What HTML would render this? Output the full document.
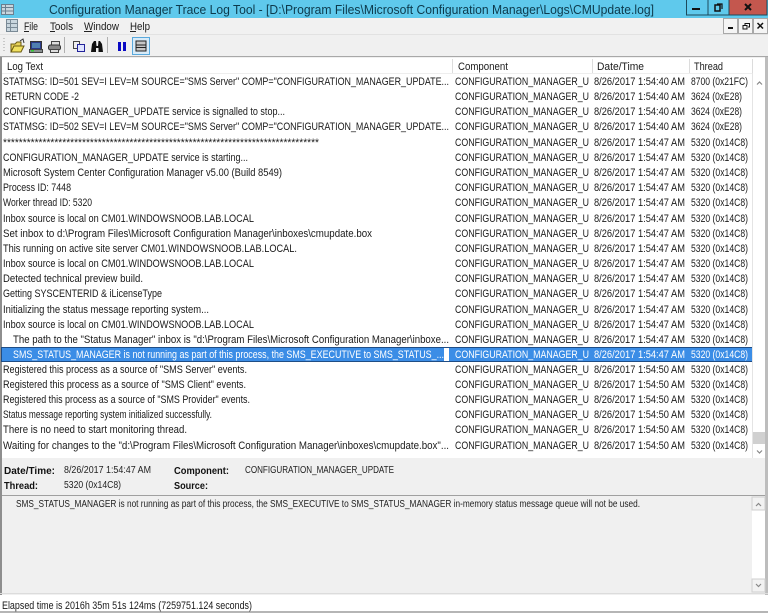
<!DOCTYPE html>
<html><head><meta charset="utf-8"><style>
html,body{margin:0;padding:0;width:768px;height:613px;overflow:hidden;background:#f0f0f0}
svg{display:block;font-family:"Liberation Sans",sans-serif;filter:blur(0.3px)}
text{fill:#1a1a1a;font-size:11px}
.s{fill:#222;font-size:10px}
.b{font-weight:bold;font-size:10px;fill:#111}
.w{fill:#fff}
</style></head><body>
<svg width="768" height="613" viewBox="0 0 768 613" xmlns="http://www.w3.org/2000/svg">
<rect width="768" height="613" fill="#f0f0f0"/>
<!-- title bar -->
<rect width="768" height="18" fill="#5fc9ec"/>
<rect x="1.500" y="4.500" width="12" height="10" fill="#c9d6de" stroke="#6b8090"/>
<path d="M1.500 7.500H13.500M1.500 11H13.500M5.500 4.500V14.500" stroke="#6b8090" fill="none"/>
<text x="49" y="14" textLength="605" lengthAdjust="spacingAndGlyphs" style="font-size:13px;fill:#0d3a4c">Configuration Manager Trace Log Tool - [D:\Program Files\Microsoft Configuration Manager\Logs\CMUpdate.log]</text>
<rect x="686.500" y="-1" width="21.500" height="16" fill="#5fc9ec" stroke="#1c4a5c"/>
<rect x="708" y="-1" width="21" height="16" fill="#5fc9ec" stroke="#1c4a5c"/>
<rect x="729" y="-1" width="38" height="16" fill="#c4574e" stroke="#1c4a5c"/>
<rect x="692" y="8" width="8" height="2" fill="#111"/>
<rect x="715" y="5" width="5" height="6" fill="none" stroke="#111" stroke-width="1.500"/>
<path d="M717 4H722V9" fill="none" stroke="#111" stroke-width="1.200"/>
<path d="M745 4L751 10M751 4L745 10" stroke="#111" stroke-width="2"/>
<!-- menu bar -->
<rect y="18" width="768" height="17" fill="#f1f1f1"/>
<rect x="6.500" y="19.500" width="11" height="12" fill="#c9d6de" stroke="#7a8a96"/>
<path d="M6.500 23.500H17.500M6.500 27.500H17.500M10.500 19.500V31.500" stroke="#7a8a96" fill="none"/>
<text x="24" y="30" textLength="14" lengthAdjust="spacingAndGlyphs">File</text>
<path d="M24 31.500H29" stroke="#222"/>
<text x="50" y="30" textLength="23" lengthAdjust="spacingAndGlyphs">Tools</text>
<path d="M50 31.500H55" stroke="#222"/>
<text x="84" y="30" textLength="35" lengthAdjust="spacingAndGlyphs">Window</text>
<path d="M84 31.500H92" stroke="#222"/>
<text x="130" y="30" textLength="20" lengthAdjust="spacingAndGlyphs">Help</text>
<path d="M130 31.500H136" stroke="#222"/>
<rect x="723.500" y="18.500" width="14" height="15" fill="#f4f4f4" stroke="#a8a8a8"/>
<rect x="738.500" y="18.500" width="14" height="15" fill="#f4f4f4" stroke="#a8a8a8"/>
<rect x="753.500" y="18.500" width="14" height="15" fill="#f4f4f4" stroke="#a8a8a8"/>
<rect x="728" y="27" width="5" height="2" fill="#111"/>
<rect x="743" y="25.500" width="4" height="3.500" fill="none" stroke="#111"/>
<path d="M745 25V23.500H749.500V27H748" fill="none" stroke="#111"/>
<path d="M757.500 23L763 28.500M763 23L757.500 28.500" stroke="#111" stroke-width="1.500"/>
<path d="M0 34.500H768" stroke="#e2e2e2"/>
<!-- toolbar -->
<path d="M4 38V52" stroke="#a0a0a0" stroke-dasharray="1 2"/>
<!-- open -->
<path d="M11 52V44H15L17 42H21V46" fill="#e8d25a" stroke="#6a5a10"/>
<path d="M11 52L14 46H24L21 52Z" fill="#f0e060" stroke="#6a5a10"/>
<path d="M20 41L23 39L24 43" fill="none" stroke="#333"/>
<!-- computer -->
<rect x="30.500" y="41.500" width="11" height="8" fill="#2a3a8a" stroke="#333"/>
<rect x="32" y="43" width="8" height="5" fill="#4f7fb0"/>
<rect x="29.500" y="49.500" width="13" height="3" fill="#8a9090" stroke="#444"/>
<rect x="31" y="50" width="3" height="1.500" fill="#3c3"/>
<!-- printer -->
<rect x="51.500" y="41.500" width="8" height="4" fill="#ddd" stroke="#444"/>
<rect x="48.500" y="45" width="12" height="5" rx="2" fill="#888" stroke="#333"/>
<rect x="50.500" y="49.500" width="8" height="3" fill="#ddd" stroke="#444"/>
<path d="M64.500 37V53" stroke="#b0b0b0"/>
<!-- copy -->
<rect x="73.500" y="41.500" width="6" height="7" fill="#eee" stroke="#444"/>
<rect x="77.500" y="44.500" width="7" height="7" fill="#dfe4ff" stroke="#22229a"/>
<!-- binoculars -->
<path d="M91 52L92 44L94 41H96L96.500 46H98L98.500 41H100L102 44L103 52H98.500V48H96V52Z" fill="#111"/>
<path d="M107.500 37V53" stroke="#b0b0b0"/>
<!-- pause -->
<rect x="118" y="42" width="3" height="9" fill="#0a0ac4"/>
<rect x="123" y="42" width="3" height="9" fill="#0a0ac4"/>
<!-- details toggle -->
<rect x="132.500" y="37.500" width="17" height="17" fill="#d8ebf8" stroke="#5aa9dc"/>
<rect x="136" y="41" width="10" height="10" fill="#c6c6c6" stroke="#222"/>
<path d="M136 45H146M136 47.500H146" stroke="#222"/>
<!-- list -->
<path d="M0 56.500H768" stroke="#a8a8a8"/>
<rect x="0" y="57" width="2" height="538" fill="#8e8e8e"/>
<rect x="2" y="58" width="766" height="400" fill="#fff"/>
<rect x="765" y="57" width="3" height="538" fill="#bdbdbd"/>
<path d="M452.500 59V73M592.500 59V73M689.500 59V73M752.500 59V73" stroke="#dcdcdc"/>
<path d="M2 73.500H753" stroke="#eee"/>
<text x="7" y="70" textLength="36" lengthAdjust="spacingAndGlyphs">Log Text</text>
<text x="458" y="70" textLength="50" lengthAdjust="spacingAndGlyphs">Component</text>
<text x="597" y="70" textLength="47" lengthAdjust="spacingAndGlyphs">Date/Time</text>
<text x="694" y="70" textLength="29" lengthAdjust="spacingAndGlyphs">Thread</text>
<!-- selected row -->
<rect x="1.500" y="347.500" width="751" height="14" fill="#3b8de6" stroke="#1f4d85"/>
<rect x="444" y="348" width="5" height="13" fill="#fff"/>
<g>
<text x="3" y="85" textLength="446" lengthAdjust="spacingAndGlyphs">STATMSG: ID=501 SEV=I LEV=M SOURCE="SMS Server" COMP="CONFIGURATION_MANAGER_UPDATE...</text>
<text x="5" y="100" textLength="74" lengthAdjust="spacingAndGlyphs">RETURN CODE -2</text>
<text x="3" y="115" textLength="282" lengthAdjust="spacingAndGlyphs">CONFIGURATION_MANAGER_UPDATE service is signalled to stop...</text>
<text x="3" y="130" textLength="446" lengthAdjust="spacingAndGlyphs">STATMSG: ID=502 SEV=I LEV=M SOURCE="SMS Server" COMP="CONFIGURATION_MANAGER_UPDATE...</text>
<text x="3" y="146" textLength="316" lengthAdjust="spacingAndGlyphs">********************************************************************************</text>
<text x="3" y="161" textLength="245" lengthAdjust="spacingAndGlyphs">CONFIGURATION_MANAGER_UPDATE service is starting...</text>
<text x="3" y="176" textLength="279" lengthAdjust="spacingAndGlyphs">Microsoft System Center Configuration Manager v5.00 (Build 8549)</text>
<text x="3" y="191" textLength="68" lengthAdjust="spacingAndGlyphs">Process ID: 7448</text>
<text x="3" y="206" textLength="89" lengthAdjust="spacingAndGlyphs">Worker thread ID: 5320</text>
<text x="3" y="222" textLength="251" lengthAdjust="spacingAndGlyphs">Inbox source is local on CM01.WINDOWSNOOB.LAB.LOCAL</text>
<text x="3" y="237" textLength="369" lengthAdjust="spacingAndGlyphs">Set inbox to d:\Program Files\Microsoft Configuration Manager\inboxes\cmupdate.box</text>
<text x="3" y="252" textLength="294" lengthAdjust="spacingAndGlyphs">This running on active site server CM01.WINDOWSNOOB.LAB.LOCAL.</text>
<text x="3" y="267" textLength="251" lengthAdjust="spacingAndGlyphs">Inbox source is local on CM01.WINDOWSNOOB.LAB.LOCAL</text>
<text x="3" y="282" textLength="140" lengthAdjust="spacingAndGlyphs">Detected technical preview build.</text>
<text x="3" y="297" textLength="159" lengthAdjust="spacingAndGlyphs">Getting SYSCENTERID &amp; iLicenseType</text>
<text x="3" y="313" textLength="206" lengthAdjust="spacingAndGlyphs">Initializing the status message reporting system...</text>
<text x="3" y="328" textLength="251" lengthAdjust="spacingAndGlyphs">Inbox source is local on CM01.WINDOWSNOOB.LAB.LOCAL</text>
<text x="13" y="343" textLength="436" lengthAdjust="spacingAndGlyphs">The path to the "Status Manager" inbox is "d:\Program Files\Microsoft Configuration Manager\inboxe...</text>
<text class="w" x="13" y="358" textLength="431" lengthAdjust="spacingAndGlyphs">SMS_STATUS_MANAGER is not running as part of this process, the SMS_EXECUTIVE to SMS_STATUS_...</text>
<text x="3" y="373" textLength="244" lengthAdjust="spacingAndGlyphs">Registered this process as a source of "SMS Server" events.</text>
<text x="3" y="388" textLength="243" lengthAdjust="spacingAndGlyphs">Registered this process as a source of "SMS Client" events.</text>
<text x="3" y="403" textLength="247" lengthAdjust="spacingAndGlyphs">Registered this process as a source of "SMS Provider" events.</text>
<text x="3" y="418" textLength="209" lengthAdjust="spacingAndGlyphs">Status message reporting system initialized successfully.</text>
<text x="3" y="433" textLength="184" lengthAdjust="spacingAndGlyphs">There is no need to start monitoring thread.</text>
<text x="3" y="449" textLength="446" lengthAdjust="spacingAndGlyphs">Waiting for changes to the "d:\Program Files\Microsoft Configuration Manager\inboxes\cmupdate.box"...</text>
</g>
<g>
<text x="455" y="85" textLength="134" lengthAdjust="spacingAndGlyphs">CONFIGURATION_MANAGER_U</text><text x="594" y="85" textLength="91" lengthAdjust="spacingAndGlyphs">8/26/2017 1:54:40 AM</text><text x="691" y="85" textLength="57" lengthAdjust="spacingAndGlyphs">8700 (0x21FC)</text>
<text x="455" y="100" textLength="134" lengthAdjust="spacingAndGlyphs">CONFIGURATION_MANAGER_U</text><text x="594" y="100" textLength="91" lengthAdjust="spacingAndGlyphs">8/26/2017 1:54:40 AM</text><text x="691" y="100" textLength="51" lengthAdjust="spacingAndGlyphs">3624 (0xE28)</text>
<text x="455" y="115" textLength="134" lengthAdjust="spacingAndGlyphs">CONFIGURATION_MANAGER_U</text><text x="594" y="115" textLength="91" lengthAdjust="spacingAndGlyphs">8/26/2017 1:54:40 AM</text><text x="691" y="115" textLength="51" lengthAdjust="spacingAndGlyphs">3624 (0xE28)</text>
<text x="455" y="130" textLength="134" lengthAdjust="spacingAndGlyphs">CONFIGURATION_MANAGER_U</text><text x="594" y="130" textLength="91" lengthAdjust="spacingAndGlyphs">8/26/2017 1:54:40 AM</text><text x="691" y="130" textLength="51" lengthAdjust="spacingAndGlyphs">3624 (0xE28)</text>
<text x="455" y="146" textLength="134" lengthAdjust="spacingAndGlyphs">CONFIGURATION_MANAGER_U</text><text x="594" y="146" textLength="91" lengthAdjust="spacingAndGlyphs">8/26/2017 1:54:47 AM</text><text x="691" y="146" textLength="57" lengthAdjust="spacingAndGlyphs">5320 (0x14C8)</text>
<text x="455" y="161" textLength="134" lengthAdjust="spacingAndGlyphs">CONFIGURATION_MANAGER_U</text><text x="594" y="161" textLength="91" lengthAdjust="spacingAndGlyphs">8/26/2017 1:54:47 AM</text><text x="691" y="161" textLength="57" lengthAdjust="spacingAndGlyphs">5320 (0x14C8)</text>
<text x="455" y="176" textLength="134" lengthAdjust="spacingAndGlyphs">CONFIGURATION_MANAGER_U</text><text x="594" y="176" textLength="91" lengthAdjust="spacingAndGlyphs">8/26/2017 1:54:47 AM</text><text x="691" y="176" textLength="57" lengthAdjust="spacingAndGlyphs">5320 (0x14C8)</text>
<text x="455" y="191" textLength="134" lengthAdjust="spacingAndGlyphs">CONFIGURATION_MANAGER_U</text><text x="594" y="191" textLength="91" lengthAdjust="spacingAndGlyphs">8/26/2017 1:54:47 AM</text><text x="691" y="191" textLength="57" lengthAdjust="spacingAndGlyphs">5320 (0x14C8)</text>
<text x="455" y="206" textLength="134" lengthAdjust="spacingAndGlyphs">CONFIGURATION_MANAGER_U</text><text x="594" y="206" textLength="91" lengthAdjust="spacingAndGlyphs">8/26/2017 1:54:47 AM</text><text x="691" y="206" textLength="57" lengthAdjust="spacingAndGlyphs">5320 (0x14C8)</text>
<text x="455" y="222" textLength="134" lengthAdjust="spacingAndGlyphs">CONFIGURATION_MANAGER_U</text><text x="594" y="222" textLength="91" lengthAdjust="spacingAndGlyphs">8/26/2017 1:54:47 AM</text><text x="691" y="222" textLength="57" lengthAdjust="spacingAndGlyphs">5320 (0x14C8)</text>
<text x="455" y="237" textLength="134" lengthAdjust="spacingAndGlyphs">CONFIGURATION_MANAGER_U</text><text x="594" y="237" textLength="91" lengthAdjust="spacingAndGlyphs">8/26/2017 1:54:47 AM</text><text x="691" y="237" textLength="57" lengthAdjust="spacingAndGlyphs">5320 (0x14C8)</text>
<text x="455" y="252" textLength="134" lengthAdjust="spacingAndGlyphs">CONFIGURATION_MANAGER_U</text><text x="594" y="252" textLength="91" lengthAdjust="spacingAndGlyphs">8/26/2017 1:54:47 AM</text><text x="691" y="252" textLength="57" lengthAdjust="spacingAndGlyphs">5320 (0x14C8)</text>
<text x="455" y="267" textLength="134" lengthAdjust="spacingAndGlyphs">CONFIGURATION_MANAGER_U</text><text x="594" y="267" textLength="91" lengthAdjust="spacingAndGlyphs">8/26/2017 1:54:47 AM</text><text x="691" y="267" textLength="57" lengthAdjust="spacingAndGlyphs">5320 (0x14C8)</text>
<text x="455" y="282" textLength="134" lengthAdjust="spacingAndGlyphs">CONFIGURATION_MANAGER_U</text><text x="594" y="282" textLength="91" lengthAdjust="spacingAndGlyphs">8/26/2017 1:54:47 AM</text><text x="691" y="282" textLength="57" lengthAdjust="spacingAndGlyphs">5320 (0x14C8)</text>
<text x="455" y="297" textLength="134" lengthAdjust="spacingAndGlyphs">CONFIGURATION_MANAGER_U</text><text x="594" y="297" textLength="91" lengthAdjust="spacingAndGlyphs">8/26/2017 1:54:47 AM</text><text x="691" y="297" textLength="57" lengthAdjust="spacingAndGlyphs">5320 (0x14C8)</text>
<text x="455" y="313" textLength="134" lengthAdjust="spacingAndGlyphs">CONFIGURATION_MANAGER_U</text><text x="594" y="313" textLength="91" lengthAdjust="spacingAndGlyphs">8/26/2017 1:54:47 AM</text><text x="691" y="313" textLength="57" lengthAdjust="spacingAndGlyphs">5320 (0x14C8)</text>
<text x="455" y="328" textLength="134" lengthAdjust="spacingAndGlyphs">CONFIGURATION_MANAGER_U</text><text x="594" y="328" textLength="91" lengthAdjust="spacingAndGlyphs">8/26/2017 1:54:47 AM</text><text x="691" y="328" textLength="57" lengthAdjust="spacingAndGlyphs">5320 (0x14C8)</text>
<text x="455" y="343" textLength="134" lengthAdjust="spacingAndGlyphs">CONFIGURATION_MANAGER_U</text><text x="594" y="343" textLength="91" lengthAdjust="spacingAndGlyphs">8/26/2017 1:54:47 AM</text><text x="691" y="343" textLength="57" lengthAdjust="spacingAndGlyphs">5320 (0x14C8)</text>
<text class="w" x="455" y="358" textLength="134" lengthAdjust="spacingAndGlyphs">CONFIGURATION_MANAGER_U</text><text class="w" x="594" y="358" textLength="91" lengthAdjust="spacingAndGlyphs">8/26/2017 1:54:47 AM</text><text class="w" x="691" y="358" textLength="57" lengthAdjust="spacingAndGlyphs">5320 (0x14C8)</text>
<text x="455" y="373" textLength="134" lengthAdjust="spacingAndGlyphs">CONFIGURATION_MANAGER_U</text><text x="594" y="373" textLength="91" lengthAdjust="spacingAndGlyphs">8/26/2017 1:54:50 AM</text><text x="691" y="373" textLength="57" lengthAdjust="spacingAndGlyphs">5320 (0x14C8)</text>
<text x="455" y="388" textLength="134" lengthAdjust="spacingAndGlyphs">CONFIGURATION_MANAGER_U</text><text x="594" y="388" textLength="91" lengthAdjust="spacingAndGlyphs">8/26/2017 1:54:50 AM</text><text x="691" y="388" textLength="57" lengthAdjust="spacingAndGlyphs">5320 (0x14C8)</text>
<text x="455" y="403" textLength="134" lengthAdjust="spacingAndGlyphs">CONFIGURATION_MANAGER_U</text><text x="594" y="403" textLength="91" lengthAdjust="spacingAndGlyphs">8/26/2017 1:54:50 AM</text><text x="691" y="403" textLength="57" lengthAdjust="spacingAndGlyphs">5320 (0x14C8)</text>
<text x="455" y="418" textLength="134" lengthAdjust="spacingAndGlyphs">CONFIGURATION_MANAGER_U</text><text x="594" y="418" textLength="91" lengthAdjust="spacingAndGlyphs">8/26/2017 1:54:50 AM</text><text x="691" y="418" textLength="57" lengthAdjust="spacingAndGlyphs">5320 (0x14C8)</text>
<text x="455" y="433" textLength="134" lengthAdjust="spacingAndGlyphs">CONFIGURATION_MANAGER_U</text><text x="594" y="433" textLength="91" lengthAdjust="spacingAndGlyphs">8/26/2017 1:54:50 AM</text><text x="691" y="433" textLength="57" lengthAdjust="spacingAndGlyphs">5320 (0x14C8)</text>
<text x="455" y="449" textLength="134" lengthAdjust="spacingAndGlyphs">CONFIGURATION_MANAGER_U</text><text x="594" y="449" textLength="91" lengthAdjust="spacingAndGlyphs">8/26/2017 1:54:50 AM</text><text x="691" y="449" textLength="57" lengthAdjust="spacingAndGlyphs">5320 (0x14C8)</text>
</g>
<!-- list scrollbar -->
<rect x="753" y="73" width="12" height="385" fill="#fff"/>
<path d="M752.500 73V458" stroke="#e4e4e4"/>
<path d="M757 84.500L759.500 82L762 84.500" fill="none" stroke="#888" stroke-width="1.200"/>
<rect x="753" y="432" width="12" height="12" fill="#d0d0d0"/>
<path d="M757 450.500L759.500 453L762 450.500" fill="none" stroke="#888" stroke-width="1.200"/>
<!-- detail panel -->
<rect x="2" y="458" width="763" height="37" fill="#f0f0f0"/>
<text class="b" x="4" y="474" textLength="51" lengthAdjust="spacingAndGlyphs">Date/Time:</text>
<text class="s" x="64" y="473" textLength="87" lengthAdjust="spacingAndGlyphs">8/26/2017 1:54:47 AM</text>
<text class="b" x="174" y="474" textLength="55" lengthAdjust="spacingAndGlyphs">Component:</text>
<text class="s" x="245" y="473" textLength="149" lengthAdjust="spacingAndGlyphs">CONFIGURATION_MANAGER_UPDATE</text>
<text class="b" x="4" y="489" textLength="34" lengthAdjust="spacingAndGlyphs">Thread:</text>
<text class="s" x="64" y="488" textLength="57" lengthAdjust="spacingAndGlyphs">5320 (0x14C8)</text>
<text class="b" x="174" y="489" textLength="34" lengthAdjust="spacingAndGlyphs">Source:</text>
<!-- message box -->
<path d="M2 495.500H765" stroke="#a0a0a0"/>
<text class="s" x="16" y="507" textLength="624" lengthAdjust="spacingAndGlyphs">SMS_STATUS_MANAGER is not running as part of this process, the SMS_EXECUTIVE to SMS_STATUS_MANAGER in-memory status message queue will not be used.</text>
<rect x="752" y="497" width="13" height="95" fill="#fff"/>
<rect x="752" y="497" width="13" height="13" fill="#f2f2f2" stroke="#cfcfcf"/>
<rect x="752" y="579" width="13" height="13" fill="#f2f2f2" stroke="#cfcfcf"/>
<path d="M756 506L758.500 503.500L761 506" fill="none" stroke="#888" stroke-width="1.200"/>
<path d="M756 584L758.500 586.500L761 584" fill="none" stroke="#888" stroke-width="1.200"/>
<!-- status bar -->
<rect x="0" y="595" width="768" height="16" fill="#fff"/>
<path d="M0 593.500H768" stroke="#dcdcdc"/>
<rect y="611" width="768" height="2" fill="#b5b5b5"/>
<text x="2" y="609" textLength="250" lengthAdjust="spacingAndGlyphs">Elapsed time is 2016h 35m 51s 124ms (7259751.124 seconds)</text>
</svg>
</body></html>
